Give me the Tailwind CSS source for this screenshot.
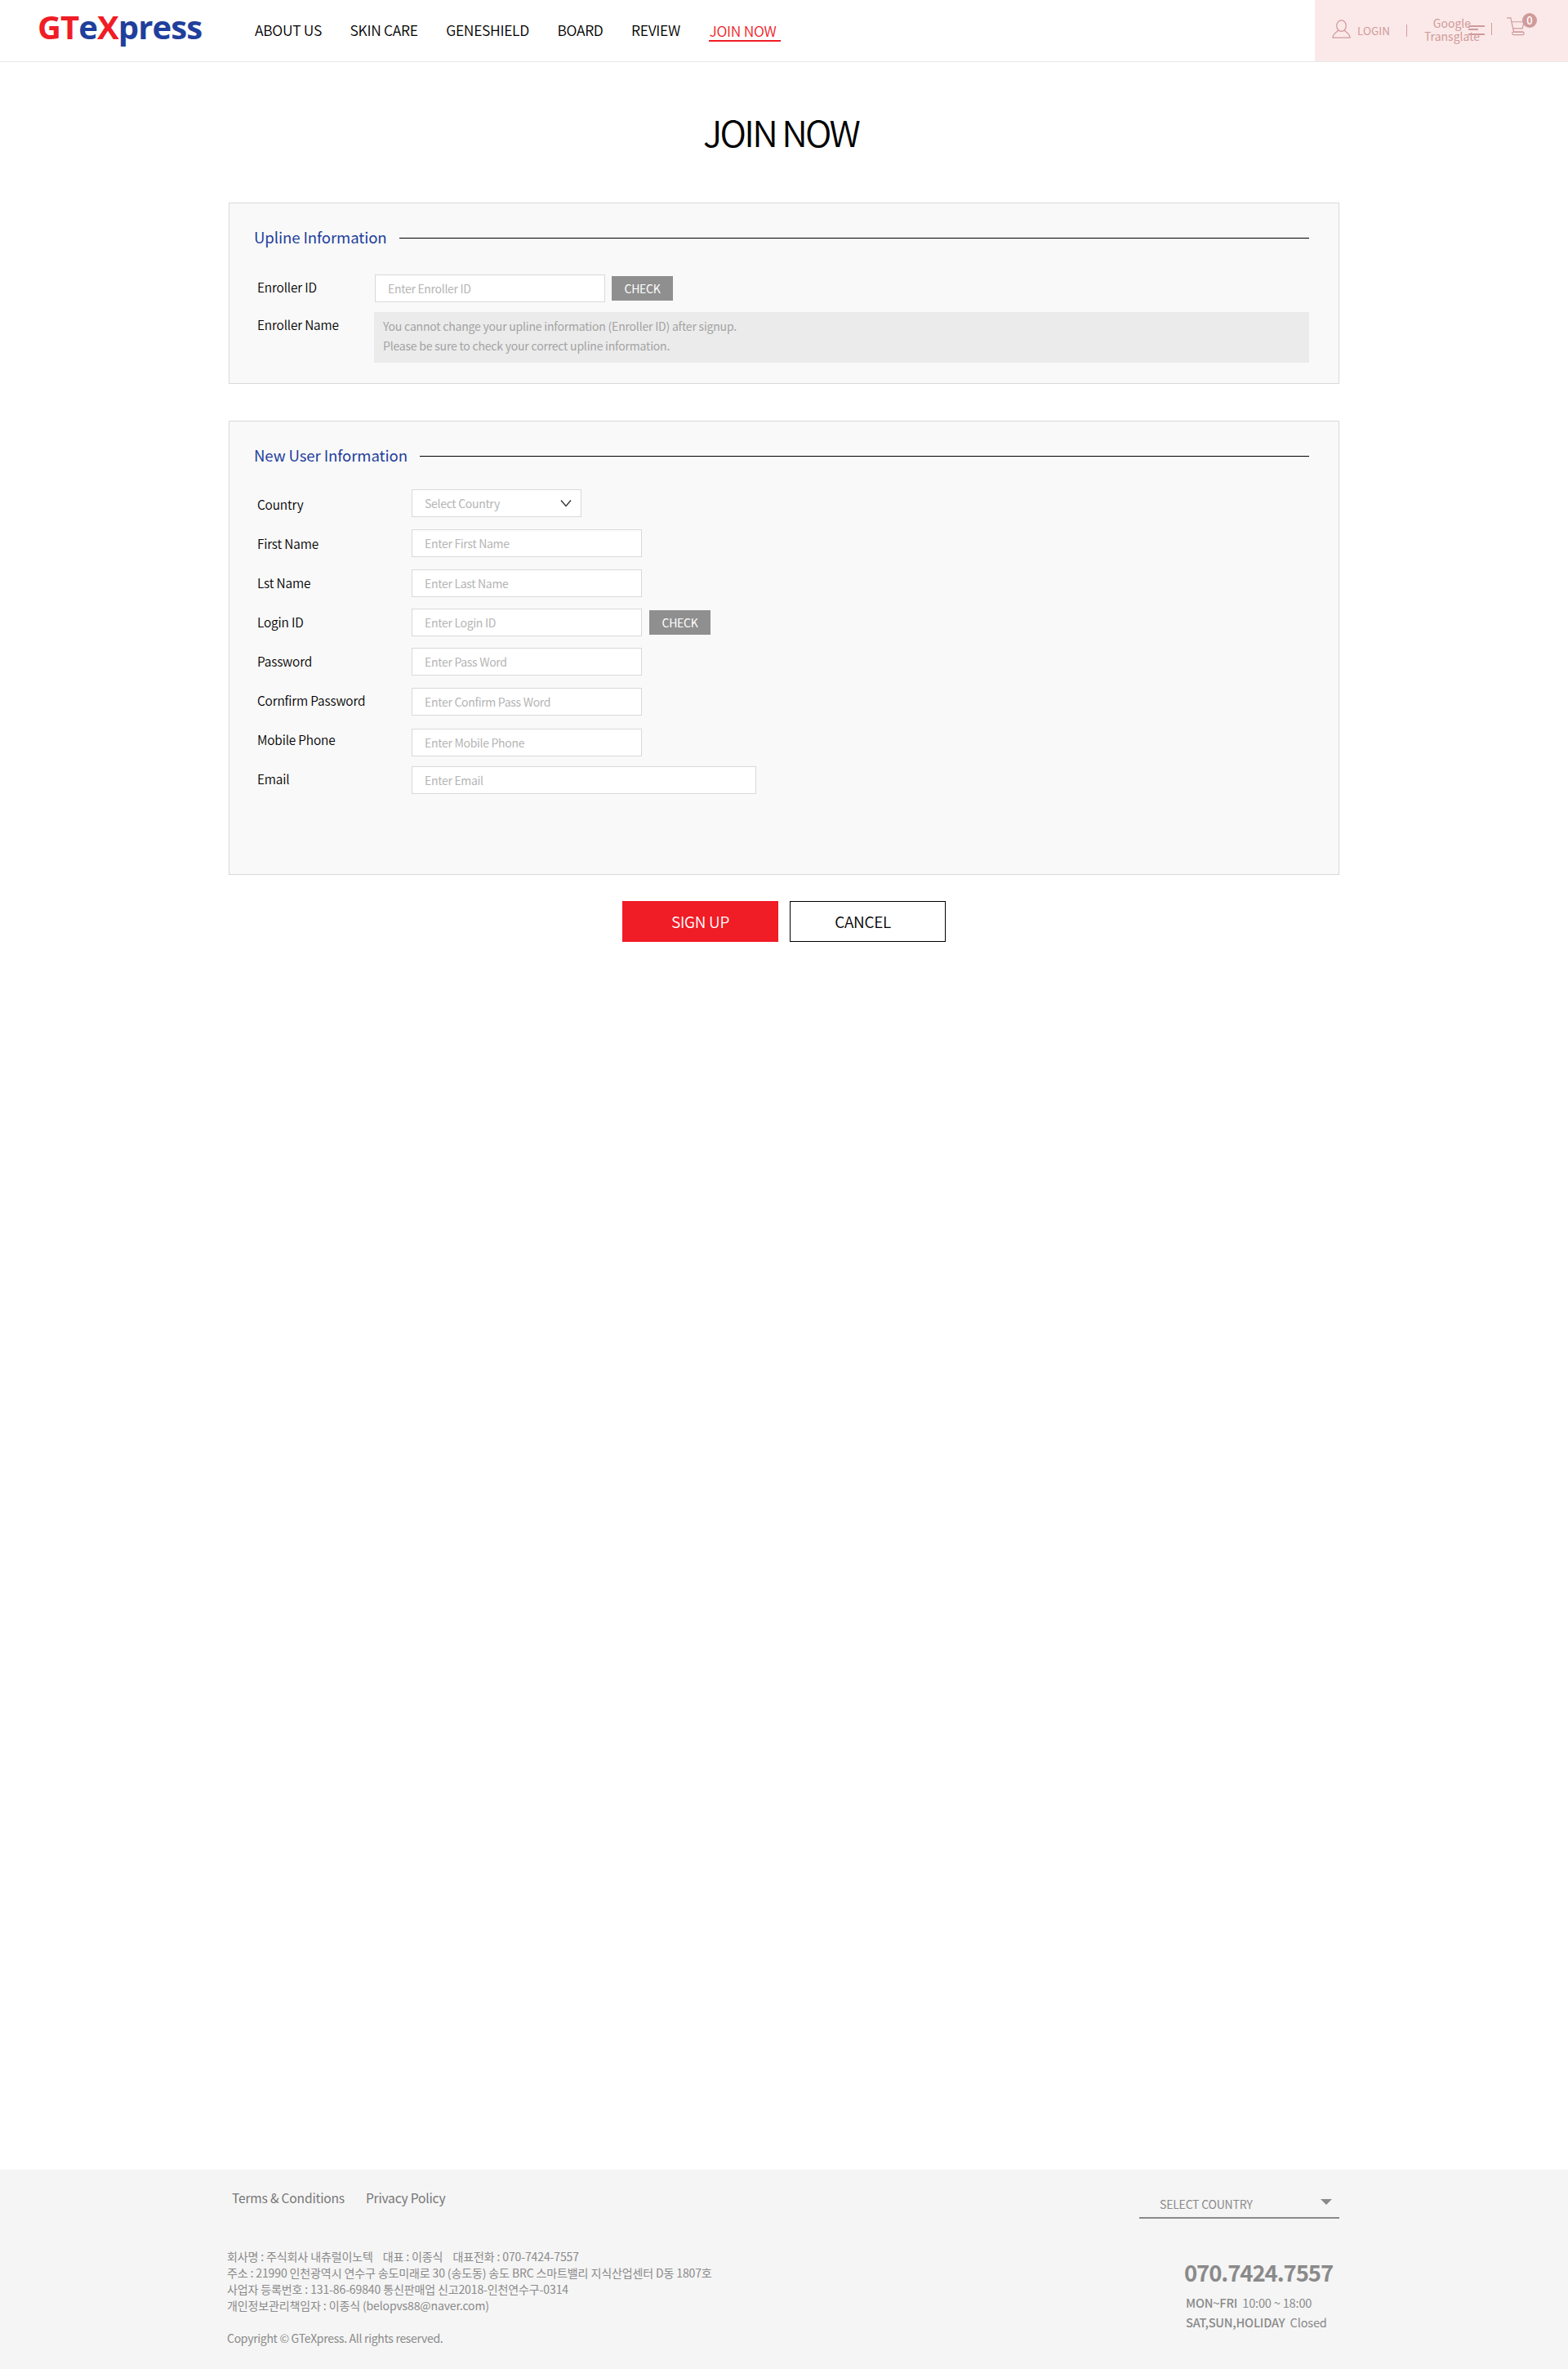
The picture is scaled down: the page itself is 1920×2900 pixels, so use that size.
<!DOCTYPE html>
<html lang="en">
<head>
    <meta charset="UTF-8">
    <meta name="viewport" content="width=device-width, initial-scale=1.0">
    <title>GTeXpress - Join Now</title>
    <script src="https://cdn.jsdelivr.net/npm/@tailwindcss/browser@4"></script>
</head>
<body class="min-h-[2900px] flex flex-col bg-white text-black font-['Noto_Sans_CJK_KR','Noto_Sans',sans-serif]">

    <!-- header -->
    <header class="h-[76px] flex border-b border-[#e8e8e8]">
        <a href="#" class="ml-[46px] w-[232px] h-[75px] flex items-center text-[40px] font-bold tracking-[-0.9px] leading-none text-[#1f3f9c] font-['Open_Sans',sans-serif] pb-[9px]"><span class="text-[#f01c26]">GT</span>e<span class="text-[#f01c26]">X</span>press</a>
        <nav class="flex items-center gap-[34.6px] ml-[34px] text-[17.5px] font-[350] tracking-[-0.3px] h-[75px]">
            <a href="#">ABOUT US</a>
            <a href="#">SKIN CARE</a>
            <a href="#">GENESHIELD</a>
            <a href="#">BOARD</a>
            <a href="#">REVIEW</a>
            <a href="#" class="text-[#f01c26] border-b-2 border-[#f01c26] leading-[23px] mt-[2px] px-px pr-[6px]">JOIN NOW</a>
        </nav>
        <div class="ml-auto w-[310px] h-[75px] bg-[#fbe9e9] text-[#d09a9b] flex items-center relative">
            <svg class="ml-[21px] w-[23px] h-[23px] mb-[5px]" viewBox="0 0 24 24" fill="none" stroke="#d09a9b" stroke-width="1.3">
                <ellipse cx="12" cy="8" rx="6" ry="7"/>
                <path d="M8 13.5 C7 16 1.5 17 1 23 H23 C22.5 17 17 16 16 13.5"/>
            </svg>
            <span class="ml-[8px] text-[13.5px] leading-none">LOGIN</span>
            <span class="ml-[20px] w-px h-[15px] bg-[#d09a9b]"></span>
            <span class="ml-[20px] w-[70px] text-center text-[14px] leading-[16px] -mt-[4px]">Google Transglate</span>
            <span class="absolute left-[188px] top-[31px] flex flex-col gap-[2px]">
                <i class="block w-[20px] h-[2px] bg-[#d09a9b]"></i>
                <i class="block w-[12px] h-[2px] bg-[#d09a9b]"></i>
                <i class="block w-[20px] h-[2px] bg-[#d09a9b] mt-[2px]"></i>
            </span>
            <span class="absolute left-[216px] top-[28px] w-px h-[15px] bg-[#d09a9b]"></span>
            <svg class="absolute left-[235px] top-[21px] w-[23px] h-[23px]" viewBox="0 0 24 24" fill="none" stroke="#d09a9b" stroke-width="1.3">
                <path d="M0 1 H5 L9 19 H21"/>
                <path d="M6 6 H22 L20 14.5 H8"/>
                <rect x="7" y="19" width="15" height="3.5" rx="1.7"/>
            </svg>
            <span class="absolute left-[254px] top-[16px] w-[18px] h-[18px] rounded-full bg-[#d09a9b] text-white text-[13px] font-medium leading-[18px] text-center">0</span>
        </div>
    </header>

    <main class="flex-1 w-[1360px] mx-auto">
        <h1 class="text-[44px] leading-[66px] font-[350] text-center tracking-[-2.7px] mt-[52px] mb-[54px] pr-[8px]">JOIN NOW</h1>

        <!-- upline -->
        <section class="h-[222px] bg-[#f9f9f9] border border-[#d9d9d9] pl-[30px] pr-[36px] pt-[26px]">
            <div class="flex items-center h-[32px] gap-[15px]">
                <h2 class="text-[18.6px] font-normal text-[#1f3f9c] tracking-[-0.1px] pb-[2px]">Upline Information</h2>
                <span class="flex-1 h-px bg-black mt-[1px]"></span>
            </div>
            <div class="flex mt-[29px]">
                <div class="w-[147px] pl-[4px] text-[15.4px] font-[350] tracking-[-0.15px]">
                    <p class="leading-[30px]">Enroller ID</p>
                    <p class="leading-[30px] mt-[16px]">Enroller Name</p>
                </div>
                <div class="flex-1">
                    <div class="flex items-center gap-[8px] pl-[1px]">
                        <input type="text" placeholder="Enter Enroller ID" class="w-[282px] h-[34px] bg-white border border-[#d9d9d9] px-[15px] text-[14px] tracking-[-0.3px] placeholder:text-[#b5b5b5]">
                        <button class="w-[75px] h-[30px] bg-[#8f8f8f] text-white text-[14px] tracking-[-0.3px]">CHECK</button>
                    </div>
                    <div class="mt-[12px] h-[62px] bg-[#ebebeb] pl-[11px] pt-[5px] text-[14px] leading-[24px] tracking-[-0.2px] text-[#a3a3a3]">
                        <p>You cannot change your upline information (Enroller ID) after signup.</p>
                        <p>Please be sure to check your correct upline information.</p>
                    </div>
                </div>
            </div>
        </section>

        <!-- new user -->
        <section class="mt-[45px] h-[556px] bg-[#f9f9f9] border border-[#d9d9d9] pl-[30px] pr-[36px] pt-[26px]">
            <div class="flex items-center h-[32px] gap-[15px]">
                <h2 class="text-[18.6px] font-normal text-[#1f3f9c] tracking-[-0.1px] pb-[2px]">New User Information</h2>
                <span class="flex-1 h-px bg-black mt-[1px]"></span>
            </div>
            <div class="flex mt-[25px]">
                <div class="w-[193px] pl-[4px] -mt-[6px] text-[15.4px] font-[350] leading-[48px] tracking-[-0.15px]">
                    <p>Country</p>
                    <p>First Name</p>
                    <p>Lst Name</p>
                    <p>Login ID</p>
                    <p>Password</p>
                    <p>Cornfirm Password</p>
                    <p>Mobile Phone</p>
                    <p>Email</p>
                </div>
                <div class="flex-1 flex flex-col items-start text-[14px] tracking-[-0.3px]">
                    <div class="w-[208px] h-[34px] bg-white border border-[#d9d9d9] pl-[15px] pr-[11px] flex items-center justify-between text-[#b5b5b5]">
                        <span>Select Country</span>
                        <svg class="w-[14px] h-[10px]" viewBox="0 0 14 10" fill="none" stroke="#333" stroke-width="1.4"><path d="M1 1.5 L7 8.5 L13 1.5"/></svg>
                    </div>
                    <input type="text" placeholder="Enter First Name" class="mt-[15px] w-[282px] h-[34px] bg-white border border-[#d9d9d9] px-[15px] placeholder:text-[#b5b5b5]">
                    <input type="text" placeholder="Enter Last Name" class="mt-[15px] w-[282px] h-[34px] bg-white border border-[#d9d9d9] px-[15px] placeholder:text-[#b5b5b5]">
                    <div class="mt-[14px] flex items-center gap-[9px]">
                        <input type="text" placeholder="Enter Login ID" class="w-[282px] h-[34px] bg-white border border-[#d9d9d9] px-[15px] placeholder:text-[#b5b5b5]">
                        <button class="w-[75px] h-[30px] bg-[#8f8f8f] text-white">CHECK</button>
                    </div>
                    <input type="password" placeholder="Enter Pass Word" class="mt-[14px] w-[282px] h-[34px] bg-white border border-[#d9d9d9] px-[15px] placeholder:text-[#b5b5b5]">
                    <input type="password" placeholder="Enter Confirm Pass Word" class="mt-[15px] w-[282px] h-[34px] bg-white border border-[#d9d9d9] px-[15px] placeholder:text-[#b5b5b5]">
                    <input type="text" placeholder="Enter Mobile Phone" class="mt-[16px] w-[282px] h-[34px] bg-white border border-[#d9d9d9] px-[15px] placeholder:text-[#b5b5b5]">
                    <input type="text" placeholder="Enter Email" class="mt-[12px] w-[422px] h-[34px] bg-white border border-[#d9d9d9] px-[15px] placeholder:text-[#b5b5b5]">
                </div>
            </div>
        </section>

        <div class="mt-[32px] flex justify-center gap-[14px]">
            <button class="w-[191px] h-[50px] bg-[#f01c26] text-white text-[19px] font-[350] tracking-[-0.3px]">SIGN UP</button>
            <button class="w-[191px] h-[50px] bg-white border border-black text-[19px] font-[350] tracking-[-0.3px] pr-[12px]">CANCEL</button>
        </div>
    </main>

    <!-- footer -->
    <footer class="h-[244px] bg-[#f5f5f5] text-[#8a8a8a]">
        <div class="w-[1360px] mx-auto flex justify-between">
            <div class="pt-[20px]">
                <div class="flex gap-[26px] pl-[4px] text-[15.6px] leading-[28px] tracking-[-0.2px] text-[#777]">
                    <a href="#">Terms &amp; Conditions</a>
                    <a href="#">Privacy Policy</a>
                </div>
                <div class="mt-[48px] -ml-[2px] text-[14px] leading-[20px] tracking-[-0.12px]">
                    <p>회사명 : 주식회사 내츄럴이노텍 &nbsp;&nbsp; 대표 : 이종식 &nbsp;&nbsp; 대표전화 : 070-7424-7557</p>
                    <p>주소 : 21990 인천광역시 연수구 송도미래로 30 (송도동) 송도 BRC 스마트밸리 지식산업센터 D동 1807호</p>
                    <p>사업자 등록번호 : 131-86-69840 통신판매업 신고2018-인천연수구-0314</p>
                    <p>개인정보관리책임자 : 이종식 (belopvs88@naver.com)</p>
                    <p class="mt-[20px] tracking-[-0.3px]">Copyright © GTeXpress. All rights reserved.</p>
                </div>
            </div>
            <div class="w-[245px] pt-[28px]">
                <div class="h-[32px] border-b-2 border-[#8a8a8a] pl-[25px] pr-[9px] flex justify-between text-[14px] leading-[28px] tracking-[-0.2px]">
                    <span>SELECT COUNTRY</span>
                    <span class="mt-[8px] w-0 h-0 border-x-[7px] border-x-transparent border-t-[7px] border-t-[#8a8a8a]"></span>
                </div>
                <p class="mt-[43px] pl-[55px] text-[27.5px] leading-[44px] font-bold tracking-[-1.1px] whitespace-nowrap">070.7424.7557</p>
                <div class="mt-[4px] pl-[57px] text-[14.6px] leading-[24px] tracking-[-0.2px] whitespace-nowrap">
                    <p><b class="font-medium">MON~FRI</b> &nbsp;10:00 ~ 18:00</p>
                    <p><b class="font-medium">SAT,SUN,HOLIDAY</b> &nbsp;Closed</p>
                </div>
            </div>
        </div>
    </footer>
</body>
</html>
